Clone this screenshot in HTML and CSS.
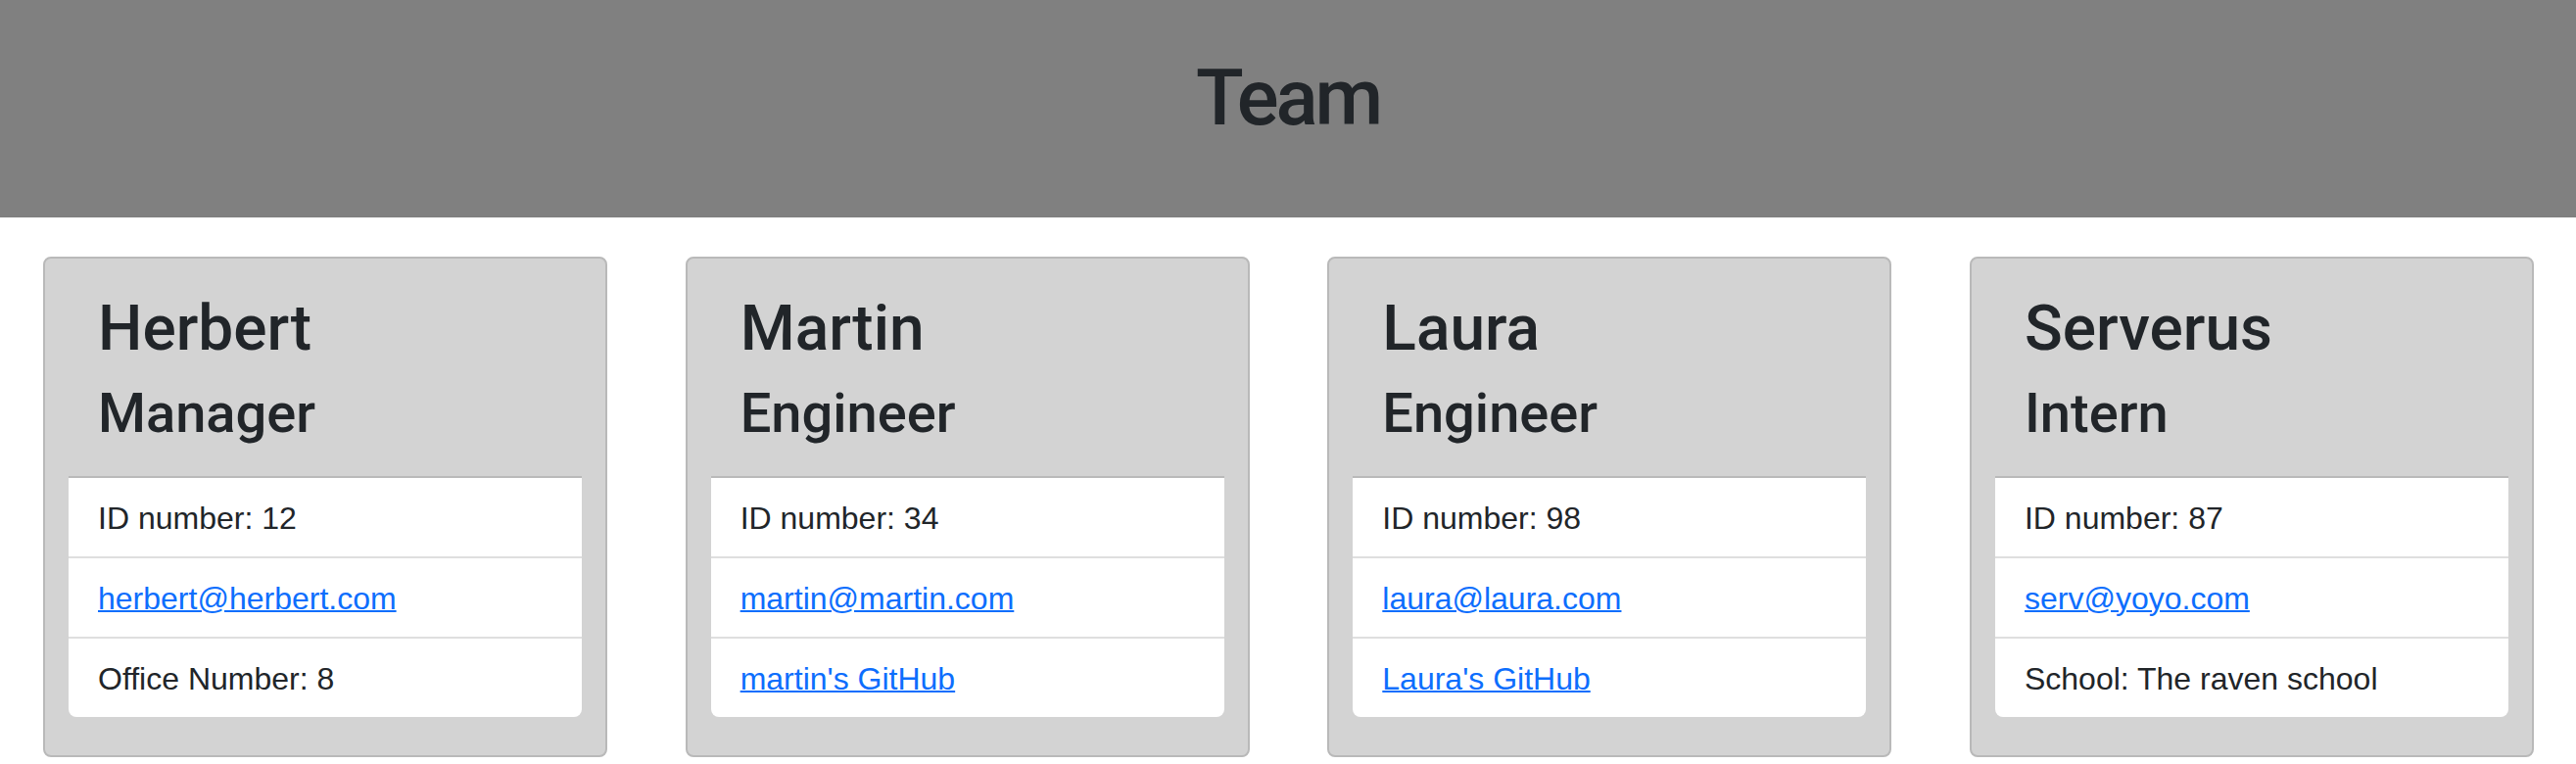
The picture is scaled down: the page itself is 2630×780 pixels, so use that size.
FILE: index.html
```html
<!DOCTYPE html>
<html lang="en">
<head>
    <meta charset="UTF-8">
    <meta name="viewport" content="width=device-width, initial-scale=1.0">
    <title>Team</title>

    <link rel="stylesheet" href="styles.css">

</head>
<body>

    <header class="team-header">
        <h1>Team</h1>
    </header>

    <main class="team-row">

        <div class="employee-card">
            <div class="employee-head">
                <h2>Herbert</h2>
                <h3>Manager</h3>
            </div>
            <ul class="employee-info">
                <li>ID number: 12</li>
                <li><a href="mailto:herbert@herbert.com">herbert@herbert.com</a></li>
                <li>Office Number: 8</li>
            </ul>
        </div>

        <div class="employee-card">
            <div class="employee-head">
                <h2>Martin</h2>
                <h3>Engineer</h3>
            </div>
            <ul class="employee-info">
                <li>ID number: 34</li>
                <li><a href="mailto:martin@martin.com">martin@martin.com</a></li>
                <li><a href="#">martin's GitHub</a></li>
            </ul>
        </div>

        <div class="employee-card">
            <div class="employee-head">
                <h2>Laura</h2>
                <h3>Engineer</h3>
            </div>
            <ul class="employee-info">
                <li>ID number: 98</li>
                <li><a href="mailto:laura@laura.com">laura@laura.com</a></li>
                <li><a href="#">Laura's GitHub</a></li>
            </ul>
        </div>

        <div class="employee-card">
            <div class="employee-head">
                <h2>Serverus</h2>
                <h3>Intern</h3>
            </div>
            <ul class="employee-info">
                <li>ID number: 87</li>
                <li><a href="mailto:serv@yoyo.com">serv@yoyo.com</a></li>
                <li>School: The raven school</li>
            </ul>
        </div>

    </main>

</body>
</html>
```

FILE: styles.css
```css
:root {
    --text: #212529;
    --line-dark: #b9b9b9;
    --line-light: #dfdfdf;
}

*, *::before, *::after {
    margin: 0;
    padding: 0;
    box-sizing: border-box;
}

body {
    font-family: "Liberation Sans", Arial, sans-serif;
    color: var(--text);
    background-color: white;
}

h1, h2, h3 {
    font-family: Roboto, "Liberation Sans", Arial, sans-serif;
    font-weight: 500;
}

.team-header {
    background-color: gray;
    padding: 52px 0 74px;
    text-align: center;
}

.team-header h1 {
    font-size: 80px;
    line-height: 96px;
    letter-spacing: -0.04em;
}

.team-row {
    display: flex;
    justify-content: space-between;
    padding: 40px 43px 0 44px;
}

.employee-card {
    width: 576px;
    background-color: lightgray;
    border: 2px solid var(--line-dark);
    border-radius: 8px;
    padding: 0 24px 39px;
}

.employee-head {
    padding: 33px 30px 30px;
    border-bottom: 2px solid var(--line-dark);
}

.employee-head h2 {
    font-size: 64px;
    line-height: 77px;
    margin-bottom: 15px;
}

.employee-head h3 {
    font-size: 56px;
    line-height: 67px;
}

.employee-info {
    list-style: none;
    background-color: white;
    border-radius: 0 0 8px 8px;
}

.employee-info li {
    font-size: 32px;
    line-height: 48px;
    padding: 17px 30px 15px;
}

.employee-info li + li {
    border-top: 2px solid var(--line-light);
}

.employee-info a {
    color: #0d6efd;
    text-decoration-thickness: 2px;
}
```
